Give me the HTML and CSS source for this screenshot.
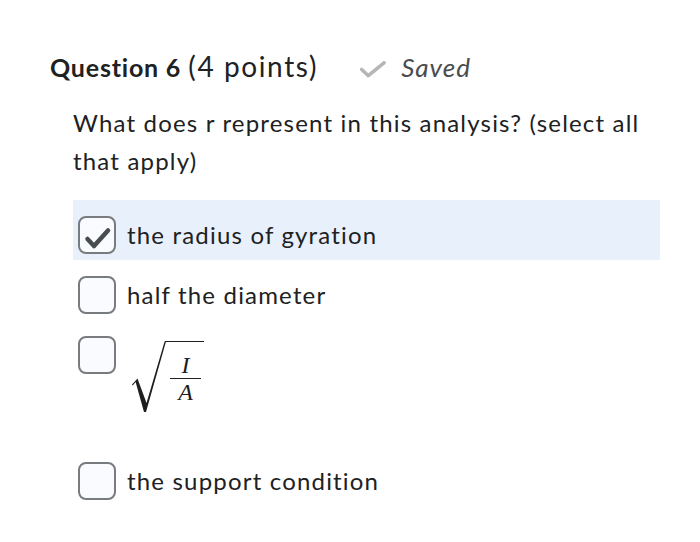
FILE: index.html
```html
<!DOCTYPE html>
<html lang="en">
<head>
<meta charset="utf-8">
<title>Question 6</title>
<link rel="stylesheet" href="styles.css">
</head>
<body>
<div class="page">
  <div class="header">
    <span class="q-title">Question 6</span> <span class="q-points">(4 points)</span>
    <span class="saved"><svg class="saved-icon" width="27" height="17" viewBox="0 0 27 17"><polyline points="2.7,8.5 9.3,14.7 25,1.8" fill="none" stroke="#b6b6b6" stroke-width="3.6" stroke-linecap="round" stroke-linejoin="round"/></svg><span class="saved-text">Saved</span></span>
  </div>
  <div class="question">What does r represent in this analysis? (select all that apply)</div>
  <div class="options">
    <div class="option selected">
      <span class="box"><svg width="34" height="34" viewBox="0 0 34 34"><polyline points="7.5,21 14,28 28,12.5" fill="none" stroke="#494c4e" stroke-width="4.5" stroke-linecap="round" stroke-linejoin="round"/></svg></span>
      <span class="label">the radius of gyration</span>
    </div>
    <div class="option">
      <span class="box"></span>
      <span class="label">half the diameter</span>
    </div>
    <div class="option">
      <span class="box"></span>
      <span class="math">
        <svg class="radical" width="34" height="71" viewBox="0 0 34 71"><polygon points="0,43.5 5.5,37.5 14.5,62 32.6,0.5 34,0.5 14,71 12,71 3.6,41 0.8,44.6" fill="#1e1e1e"/></svg>
        <span class="radicand"><span class="frac"><span class="num">I</span><span class="den">A</span></span></span>
      </span>
    </div>
    <div class="option">
      <span class="box"></span>
      <span class="label">the support condition</span>
    </div>
  </div>
</div>
</body>
</html>
```

FILE: styles.css
```css
html, body {
  margin: 0;
  padding: 0;
  background: #ffffff;
}

.page {
  padding: 46px 0 0 50px;
  font-family: Lato, "Noto Sans", sans-serif;
  color: #202122;
}

.header {
  font-size: 28px;
  line-height: 40px;
  white-space: nowrap;
}

.q-title {
  font-size: 25px;
  font-weight: 700;
  letter-spacing: 0.8px;
}

.q-points {
  font-size: 28px;
  font-weight: 400;
  letter-spacing: 1.6px;
}

.saved {
  margin-left: 34px;
  color: #494c4e;
}

.saved-icon {
  vertical-align: baseline;
  margin-bottom: -1px;
}

.saved-text {
  font-size: 26px;
  font-style: italic;
  letter-spacing: 1px;
  margin-left: 15px;
}

.question {
  margin: 17px 0 0 23px;
  width: 590px;
  font-size: 24px;
  line-height: 38px;
  letter-spacing: 1.18px;
}

.options {
  margin: 20px 0 0 23px;
  width: 587px;
}

.option {
  display: flex;
  align-items: flex-start;
  gap: 11px;
  padding: 16px 0 6px 5px;
}

.option.selected {
  background: #e8f1fb;
}

.box {
  flex: none;
  width: 38px;
  height: 38px;
  box-sizing: border-box;
  border: 2px solid #787c7f;
  border-radius: 8px;
  background: #f9fbff;
  display: flex;
  align-items: center;
  justify-content: center;
}

.box svg {
  display: block;
}

.label {
  font-size: 24px;
  line-height: 38px;
  letter-spacing: 1.18px;
}

.math {
  display: flex;
  align-items: flex-start;
  margin: 5px 0 28px 5px;
  font-family: "Liberation Serif", "DejaVu Serif", serif;
  font-style: italic;
  font-size: 24px;
  color: #1e1e1e;
}

.radical {
  display: block;
  flex: none;
}

.radicand {
  margin-left: -1px;
  border-top: 1.5px solid #1e1e1e;
  padding: 10px 3px 0 5px;
  width: 39px;
  box-sizing: border-box;
}

.frac {
  display: flex;
  flex-direction: column;
  align-items: stretch;
  text-align: center;
}

.num {
  line-height: 26px;
  border-bottom: 1.5px solid #1e1e1e;
}

.den {
  line-height: 26px;
}
```
